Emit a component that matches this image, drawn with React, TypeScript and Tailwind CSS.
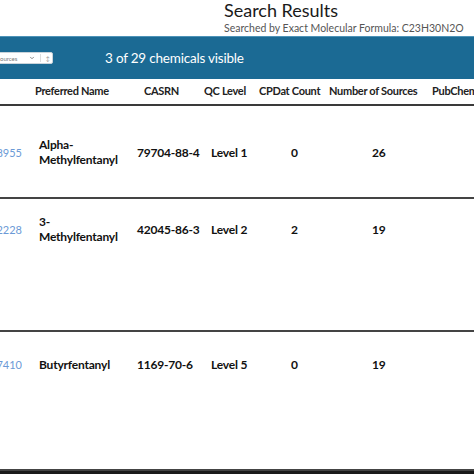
import { ChevronDown } from 'lucide-react'

const rows = [
  { id: 'DTXSID3038955', name: ['Alpha-', 'Methylfentanyl'], casrn: '79704-88-4', qc: 'Level 1', cpdat: '0', sources: '26', h: 'h-[93px]', pt: 'pt-[31px]' },
  { id: 'DTXSID1032228', name: ['3-', 'Methylfentanyl'], casrn: '42045-86-3', qc: 'Level 2', cpdat: '2', sources: '19', h: 'h-[133px]', pt: 'pt-[15px]' },
  { id: 'DTXSID8037410', name: ['Butyrfentanyl'], casrn: '1169-70-6', qc: 'Level 5', cpdat: '0', sources: '19', h: 'h-[139px]', pt: 'pt-[17px]' },
]

export default function App() {
  return (
    <div className="relative h-[474px] w-[474px] overflow-hidden bg-white font-['Lato','Liberation_Sans',sans-serif] text-[#111]">
      {/* Title */}
      <div className="h-[36px] pl-[224px]">
        <h1 className="text-[18px] leading-[20px] text-[#1a1a1a]">Search Results</h1>
        <p className="mt-[2px] text-[10.5px] leading-[12px] text-[#555]">
          Searched by Exact Molecular Formula: C23H30N2O
        </p>
      </div>

      {/* Blue bar */}
      <div className="flex h-[43px] items-center border-t border-[#4d93b8] bg-[#1b6a94]">
        <div className="ml-[-30px] flex h-[12px] w-[83px] items-center rounded-[2px] border border-[#c9d3da] bg-white pl-[29px] text-[6px] text-[#777]">
          <span>ources</span>
          <ChevronDown className="ml-[12px] h-[6px] w-[6px] text-[#666]" strokeWidth={3} />
          <span className="ml-[5px] h-[8px] w-px bg-[#ddd]" />
          <span className="ml-[4px] text-[6px] text-[#999]">↕</span>
        </div>
        <span className="ml-[52px] text-[13.5px] tracking-[-0.2px] text-white">3 of 29 chemicals visible</span>
      </div>

      {/* Header */}
      <div className="flex h-[27px] items-center border-b-2 border-[#3a3a3a] pb-[1px] text-[11px] font-bold tracking-[-0.3px] text-[#222] whitespace-nowrap">
        <span className="ml-[35px] w-[109px] shrink-0">Preferred Name</span>
        <span className="w-[60px] shrink-0">CASRN</span>
        <span className="w-[55px] shrink-0">QC Level</span>
        <span className="w-[70px] shrink-0">CPDat Count</span>
        <span className="w-[103px] shrink-0">Number of Sources</span>
        <span className="shrink-0">PubChem</span>
      </div>

      {/* Rows */}
      {rows.map((r) => (
        <div key={r.id} className={`flex items-start border-b-2 border-[#444] ${r.h} ${r.pt}`}>
          <div className="flex h-[30px] w-full items-center text-[12px] font-bold leading-[15px] tracking-[-0.2px] whitespace-nowrap">
            <div className="flex w-[22px] shrink-0 justify-end overflow-hidden text-[11px] font-normal tracking-normal text-[#6b9ad6]">
              <span>{r.id}</span>
            </div>
            <div className="ml-[17px] w-[98px] shrink-0">
              {r.name.map((n) => (
                <div key={n}>{n}</div>
              ))}
            </div>
            <span className="w-[74px] shrink-0">{r.casrn}</span>
            <span className="w-[80px] shrink-0">{r.qc}</span>
            <span className="w-[81px] shrink-0">{r.cpdat}</span>
            <span>{r.sources}</span>
          </div>
        </div>
      ))}
      <div className="h-[3px] bg-[#1a1a1a]" />
    </div>
  )
}
